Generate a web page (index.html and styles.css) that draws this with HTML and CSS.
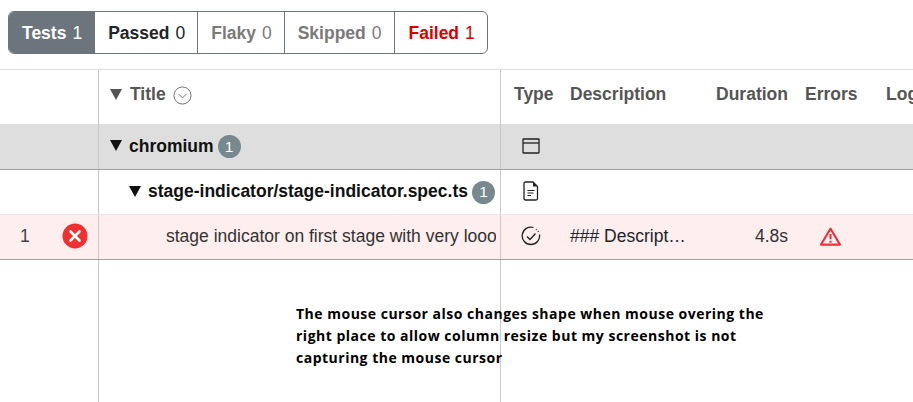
FILE: index.html
```html
<!DOCTYPE html>
<html lang="en">
<head>
<meta charset="utf-8">
<title>Test report</title>
<link rel="stylesheet" href="styles.css">
</head>
<body>
<nav class="toolbar">
  <a class="seg seg-active"><b>Tests</b> <span>1</span></a>
  <a class="seg seg-passed"><b>Passed</b> <span>0</span></a>
  <a class="seg seg-muted"><b>Flaky</b> <span>0</span></a>
  <a class="seg seg-muted seg-wide"><b>Skipped</b> <span>0</span></a>
  <a class="seg seg-failed"><b>Failed</b> <span>1</span></a>
</nav>
<main class="table">
  <div class="row head">
    <div class="cell idx"></div>
    <div class="cell title"><span class="tri"></span><span class="title-label">Title</span>
      <svg class="chev" viewBox="0 0 20 20" width="19" height="19"><circle cx="10" cy="10" r="9" fill="none" stroke="#6b6b6b" stroke-width="1"/><path d="M6 8.500l4 4 4-4" fill="none" stroke="#6b6b6b" stroke-width="1"/></svg>
    </div>
    <div class="cell type">Type</div>
    <div class="cell desc">Description</div>
    <div class="cell dur">Duration</div>
    <div class="cell err">Errors</div>
    <div class="cell logs">Logs</div>
  </div>
  <div class="row group">
    <div class="cell idx"></div>
    <div class="cell title strong"><span class="tri"></span>chromium<span class="count">1</span></div>
    <div class="cell type icon"><svg viewBox="0 0 18 16" width="18" height="16"><rect x="1" y="1" width="16" height="14" rx="0.500" fill="none" stroke="#222" stroke-width="1.300"/><path d="M1 5h16" stroke="#222" stroke-width="1.300"/></svg></div>
    <div class="cell desc"></div><div class="cell dur"></div><div class="cell err"></div><div class="cell logs"></div>
  </div>
  <div class="row file">
    <div class="cell idx"></div>
    <div class="cell title strong nested"><span class="tri"></span>stage-indicator/stage-indicator.spec.ts<span class="count">1</span></div>
    <div class="cell type icon"><svg viewBox="0 0 16 20" width="16" height="20"><path d="M2.500 1h7.500l4.500 4.500v12a1.500 1.500 0 0 1-1.500 1.500h-10.500a1.500 1.500 0 0 1-1.500-1.500v-15a1.500 1.500 0 0 1 1.500-1.500z" fill="none" stroke="#222" stroke-width="1.300"/><path d="M10 1v4.500h4.500z" fill="#222"/><path d="M4.500 9.500h7M4.500 12h6M4.500 14.500h3.500" stroke="#222" stroke-width="1.200"/></svg></div>
    <div class="cell desc"></div><div class="cell dur"></div><div class="cell err"></div><div class="cell logs"></div>
  </div>
  <div class="row fail">
    <div class="cell idx"><span class="num">1</span>
      <svg class="xmark" viewBox="0 0 26 26" width="26" height="26"><circle cx="13" cy="13" r="12.500" fill="#ee3030"/><path d="M8.500 8.500l9 9M17.500 8.500l-9 9" stroke="#fff" stroke-width="2.600" stroke-linecap="round"/></svg>
    </div>
    <div class="cell title case"><span class="clip">stage indicator on first stage with very looo</span></div>
    <div class="cell type icon"><svg viewBox="0 0 20 20" width="20" height="20"><path d="M12.500 1.500A8.700 8.700 0 1 0 18.500 8.500" fill="none" stroke="#222" stroke-width="1.300"/><path d="M15 3.200l.6.6M17 5.200l.5.7" stroke="#222" stroke-width="1.300"/><path d="M6 10.500l3 3 5.500-6" fill="none" stroke="#222" stroke-width="1.300"/></svg></div>
    <div class="cell desc"><span class="clip">### Description</span></div>
    <div class="cell dur value">4.8s</div>
    <div class="cell err icon-err"><svg viewBox="0 0 20 18" width="21" height="19"><path d="M10 1.500L19 16.700H1z" fill="none" stroke="#e8343c" stroke-width="2" stroke-linejoin="round"/><path d="M10 6.500v5M10 13v2" stroke="#e8343c" stroke-width="2"/></svg></div>
    <div class="cell logs"></div>
  </div>
  <div class="row filler">
    <div class="cell idx"></div>
    <div class="cell title"></div>
  </div>
</main>
<p class="note">The mouse cursor also changes shape when mouse overing the right place to allow column resize but my screenshot is not capturing the mouse cursor</p>
</body>
</html>
```
FILE: styles.css
```css
* { box-sizing: border-box; }
html, body { height: 100%; }
body {
  margin: 0;
  display: flex;
  flex-direction: column;
  overflow: hidden;
  background: #fff;
  color: #212529;
  font: 17.500px/24px "Liberation Sans", Arial, sans-serif;
}
.toolbar {
  display: flex;
  align-self: flex-start;
  margin: 11px 0 15px 8px;
  height: 43px;
  border: 1px solid #6c757d;
  border-radius: 6px;
  overflow: hidden;
}
.seg {
  display: flex;
  align-items: center;
  gap: 6px;
  height: 100%;
  padding: 0 12px 0 13px;
  border-left: 1px solid #6c757d;
}
.seg:first-child { border-left: 0; }
.seg-wide { padding-right: 13px; }
.seg-active { background: #6c757d; color: #fff; }
.seg-passed { color: #212529; }
.seg-muted { color: #7a7a7a; }
.seg-failed { color: #d80000; }
.table {
  flex: 1;
  display: flex;
  flex-direction: column;
  border-top: 1px solid #ddd;
  min-width: 0;
}
.row {
  display: grid;
  grid-template-columns: 99px 402px 56px 146px 89px 81px 200px;
  height: 45px;
  width: 1073px;
}
.cell {
  display: flex;
  align-items: center;
  min-width: 0;
  padding-bottom: 2px;
  white-space: nowrap;
}
.idx, .title { border-right: 1px solid #c8c8c8; }
.head { height: 54px; color: #555; font-weight: 700; }
.head .cell { padding-bottom: 6px; }
.head .title { padding-left: 11px; color: #555; }
.title-label { margin: 0 7px 0 1px; }
.tri {
  flex: none;
  width: 0;
  height: 0;
  margin-right: 7px;
  border-left: 6px solid transparent;
  border-right: 6px solid transparent;
  border-top: 11px solid currentColor;
}
.chev { flex: none; margin-top: 2px; }
.type { padding-left: 13px; }
.desc { padding-left: 13px; padding-right: 17px; }
.dur { justify-content: flex-end; padding-right: 4px; }
.err { padding-left: 13px; }
.logs { padding-left: 13px; }
.icon { justify-content: center; padding: 0 0 2px 4px; }
.group { height: 46px; background: #dedede; border-bottom: 1px solid #9e9e9e; }
.file { border-bottom: 1px solid #e8e8e8; }
.fail { background: #ffeeee; border-bottom: 1px solid #9e9e9e; }
.strong { font-weight: 700; padding-left: 11px; color: #111; }
.nested { padding-left: 30px; }
.count {
  display: flex;
  align-items: center;
  justify-content: center;
  width: 23px;
  height: 23px;
  margin: 2px 0 0 4px;
  border-radius: 50%;
  background: #78888f;
  color: #fff;
  font-weight: 400;
  font-size: 15.500px;
}
.num { width: 62px; padding-left: 20px; color: #444; }
.idx .xmark { flex: none; }
.case { padding-left: 67px; padding-right: 4px; color: #333; }
.clip { display: block; min-width: 0; overflow: hidden; }
.desc .clip { text-overflow: ellipsis; }
.value { color: #333; }
.icon-err { padding-left: 28px; }
.filler { flex: 1; }
.note {
  position: absolute;
  left: 296px;
  top: 303px;
  width: 490px;
  margin: 0;
  color: #000;
  font: 700 14px/22px "Open Sans", sans-serif;
  letter-spacing: 0.5px;
}
```
